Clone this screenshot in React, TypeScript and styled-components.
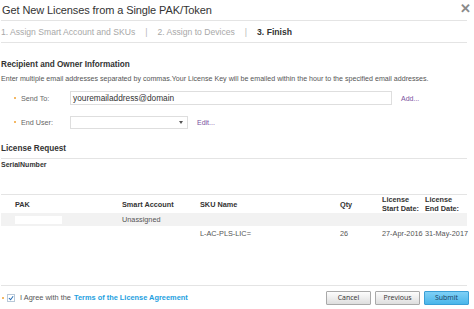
import styled, { createGlobalStyle } from 'styled-components';

const GlobalStyle = createGlobalStyle`
  html, body {
    margin: 0;
    padding: 0;
    background: #ffffff;
  }
  body {
    font-family: "Liberation Sans", Arial, sans-serif;
    color: #555555;
    font-size: 8px;
  }
`;

const Dialog = styled.div`
  width: 474px;
  height: 309px;
  overflow: hidden;
  display: flex;
  flex-direction: column;
  padding: 0 7px 0 1px;
  box-sizing: border-box;
`;

const TitleBar = styled.div`
  display: flex;
  justify-content: space-between;
  align-items: center;
  height: 21px;
  border-bottom: 1px solid #e4e4e4;
  box-sizing: border-box;
`;

const Title = styled.h1`
  margin: 0 0 0 1px;
  font-size: 11px;
  font-weight: normal;
  color: #333333;
  letter-spacing: -0.1px;
`;

const Close = styled.span`
  font-size: 13px;
  font-weight: bold;
  color: #8a8a8a;
  margin-top: -4px;
  margin-right: -4px;
`;

const Steps = styled.div`
  display: flex;
  align-items: center;
  height: 22px;
  border-bottom: 1px solid #e4e4e4;
  box-sizing: border-box;
  font-size: 8.6px;
`;

const Step = styled.span<{ $active?: boolean }>`
  color: ${(p) => (p.$active ? '#333333' : '#a8a8a8')};
  font-weight: ${(p) => (p.$active ? 'bold' : 'normal')};
`;

const Sep = styled.span`
  color: #b8b8b8;
  margin: 0 10px;
`;

const SectionTitle = styled.h2`
  margin: 0;
  font-size: 8.2px;
  font-weight: bold;
  color: #333333;
`;

const Recipient = styled.section`
  padding-top: 17px;
  display: flex;
  flex-direction: column;
`;

const Hint = styled.p`
  margin: 6px 0 0;
  font-size: 7.1px;
  color: #555555;
`;

const FieldRow = styled.div<{ $top: number }>`
  display: flex;
  align-items: center;
  margin-top: ${(p) => p.$top}px;
  height: 14px;
`;

const Label = styled.label`
  width: 56px;
  padding-left: 13px;
  display: flex;
  align-items: center;
  font-size: 7.2px;
  color: #666666;
`;

const Bullet = styled.span`
  display: inline-block;
  width: 2px;
  height: 2px;
  border-radius: 50%;
  background: #f0a030;
  margin-right: 5px;
`;

const TextInput = styled.div`
  width: 322px;
  height: 14px;
  border: 1px solid #dedede;
  box-sizing: border-box;
  padding-left: 2px;
  font-size: 8.3px;
  color: #333333;
  display: flex;
  align-items: center;
`;

const Select = styled.div`
  width: 118px;
  height: 13px;
  border: 1px solid #dedede;
  box-sizing: border-box;
  display: flex;
  justify-content: flex-end;
  align-items: center;
  padding-right: 4px;
`;

const Caret = styled.span`
  width: 0;
  height: 0;
  border-left: 2px solid transparent;
  border-right: 2px solid transparent;
  border-top: 3px solid #555555;
`;

const Link = styled.a`
  color: #7a52a0;
  font-size: 7px;
  text-decoration: none;
  margin-left: 9px;
`;

const LicenseSection = styled.section`
  margin-top: 15px;
  display: flex;
  flex-direction: column;
  flex: 1;
`;

const SerialBox = styled.div`
  margin-top: 5px;
  border-top: 1px solid #e4e4e4;
  border-bottom: 1px solid #e4e4e4;
  height: 37px;
  box-sizing: border-box;
  padding-top: 2px;
  font-size: 7px;
  font-weight: bold;
  color: #333333;
`;

const Table = styled.div`
  display: flex;
  flex-direction: column;
  flex: 1;
`;

const Row = styled.div<{ $shade?: boolean; $h: number }>`
  display: grid;
  grid-template-columns: 121px 78px 140px 42px 43px 1fr;
  align-items: center;
  height: ${(p) => p.$h}px;
  background: ${(p) => (p.$shade ? '#f2f2f2' : 'transparent')};
  font-size: 7.3px;
  color: #555555;
  white-space: nowrap;
`;

const Head = styled.div`
  font-weight: bold;
  color: #333333;
  line-height: 9px;
`;

const FirstCell = styled.div`
  padding-left: 14px;
`;

const Redacted = styled.div`
  width: 47px;
  height: 8px;
  background: #ffffff;
`;

const Footer = styled.div`
  border-top: 1px solid #e4e4e4;
  height: 23px;
  display: flex;
  align-items: center;
  justify-content: space-between;
`;

const Agree = styled.div`
  display: flex;
  align-items: center;
  font-size: 7.4px;
  color: #555555;
  padding-left: 1px;
`;

const Check = styled.span`
  width: 8px;
  height: 8px;
  border: 1px solid #b8c8d8;
  box-sizing: border-box;
  margin: 0 5px 0 -2px;
  display: flex;
  align-items: center;
  justify-content: center;
  background: #ffffff;
`;

const Terms = styled.a`
  color: #1e9fe0;
  font-weight: bold;
  text-decoration: none;
  margin-left: 3px;
`;

const Buttons = styled.div`
  display: flex;
  gap: 4px;
  margin-right: -2px;
`;

const Button = styled.button<{ $primary?: boolean }>`
  width: 45px;
  height: 14px;
  padding: 0;
  font-family: "Open Sans", "Liberation Sans", sans-serif;
  font-size: 7px;
  color: ${(p) => (p.$primary ? '#1a3d5c' : '#333333')};
  border: 1px solid ${(p) => (p.$primary ? '#3a9fd6' : '#a9a9a9')};
  border-radius: 1px;
  background: ${(p) =>
    p.$primary
      ? 'linear-gradient(#7fd0f6, #4ab6ea)'
      : 'linear-gradient(#fdfdfd, #dedede)'};
`;

export default function App() {
  return (
    <>
      <GlobalStyle />
      <Dialog>
        <TitleBar>
          <Title>Get New Licenses from a Single PAK/Token</Title>
          <Close>✕</Close>
        </TitleBar>
        <Steps>
          <Step>1. Assign Smart Account and SKUs</Step>
          <Sep>|</Sep>
          <Step>2. Assign to Devices</Step>
          <Sep>|</Sep>
          <Step $active>3. Finish</Step>
        </Steps>

        <Recipient>
          <SectionTitle>Recipient and Owner Information</SectionTitle>
          <Hint>
            Enter multiple email addresses separated by commas.Your License Key will be emailed within
            the hour to the specified email addresses.
          </Hint>
          <FieldRow $top={8}>
            <Label>
              <Bullet />
              Send To:
            </Label>
            <TextInput>youremailaddress@domain</TextInput>
            <Link href="#">Add...</Link>
          </FieldRow>
          <FieldRow $top={10}>
            <Label>
              <Bullet />
              End User:
            </Label>
            <Select>
              <Caret />
            </Select>
            <Link href="#">Edit...</Link>
          </FieldRow>
        </Recipient>

        <LicenseSection>
          <SectionTitle>License Request</SectionTitle>
          <SerialBox>SerialNumber</SerialBox>
          <Table>
            <Row $h={18}>
              <FirstCell>
                <Head>PAK</Head>
              </FirstCell>
              <Head>Smart Account</Head>
              <Head>SKU Name</Head>
              <Head>Qty</Head>
              <Head>
                License
                <br />
                Start Date:
              </Head>
              <Head>
                License
                <br />
                End Date:
              </Head>
            </Row>
            <Row $h={13} $shade>
              <FirstCell>
                <Redacted />
              </FirstCell>
              <div>Unassigned</div>
              <div />
              <div />
              <div />
              <div />
            </Row>
            <Row $h={14}>
              <div />
              <div />
              <div>L-AC-PLS-LIC=</div>
              <div>26</div>
              <div>27-Apr-2016</div>
              <div>31-May-2017</div>
            </Row>
          </Table>
        </LicenseSection>

        <Footer>
          <Agree>
            <Bullet />
            <Check>
              <svg width="7" height="6" viewBox="0 0 7 6">
                <path d="M1 3 L3 5 L6 1" fill="none" stroke="#2a6fb5" strokeWidth="1.2" />
              </svg>
            </Check>
            I Agree with the
            <Terms href="#">Terms of the License Agreement</Terms>
          </Agree>
          <Buttons>
            <Button>Cancel</Button>
            <Button>Previous</Button>
            <Button $primary>Submit</Button>
          </Buttons>
        </Footer>
      </Dialog>
    </>
  );
}
